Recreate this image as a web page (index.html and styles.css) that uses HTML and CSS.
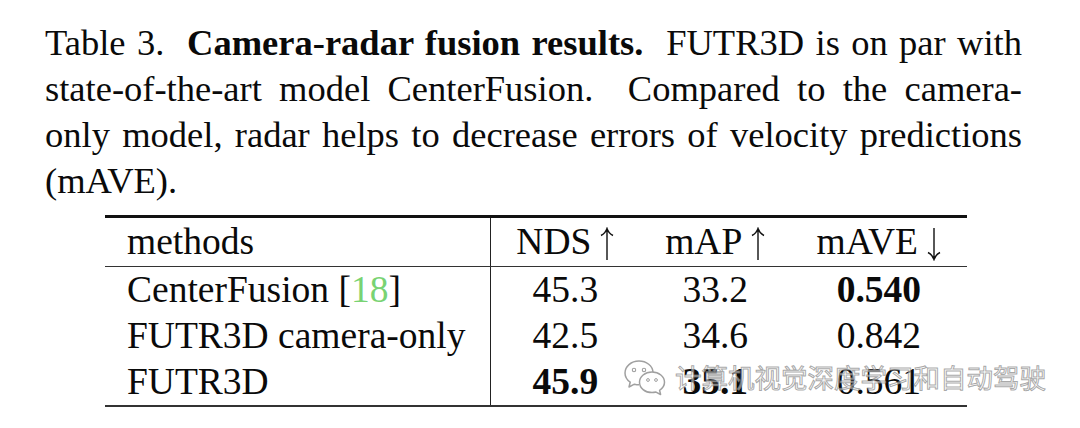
FILE: index.html
```html
<!DOCTYPE html>
<html lang="en">
<head>
    <meta charset="UTF-8">
    <meta name="viewport" content="width=device-width, initial-scale=1.0">
    <title>Table 3</title>
    <link rel="stylesheet" href="styles.css">
</head>
<body>
    <div class="page">
        <p class="caption">
            <span class="line">Table 3.&nbsp; <b>Camera-radar fusion results.</b>&nbsp; FUTR3D is on par with</span>
            <span class="line">state-of-the-art model CenterFusion.&nbsp; Compared to the camera-</span>
            <span class="line">only model, radar helps to decrease errors of velocity predictions</span>
            <span class="line last">(mAVE).</span>
        </p>

        <div class="table-wrap">
            <table class="results">
                <thead>
                    <tr>
                        <th class="method">methods</th>
                        <th>NDS<svg class="arrow" width="14" height="34" viewBox="0 0 14 34"><path d="M7 1.5V33M1 8.5C4 7 6 4.5 7 1.5C8 4.5 10 7 13 8.5" fill="none" stroke="#111" stroke-width="1.4"/></svg></th>
                        <th>mAP<svg class="arrow" width="14" height="34" viewBox="0 0 14 34"><path d="M7 1.5V33M1 8.5C4 7 6 4.5 7 1.5C8 4.5 10 7 13 8.5" fill="none" stroke="#111" stroke-width="1.4"/></svg></th>
                        <th>mAVE<svg class="arrow" width="14" height="34" viewBox="0 0 14 34"><path d="M7 1V32.5M1 25.5C4 27 6 29.5 7 32.5C8 29.5 10 27 13 25.5" fill="none" stroke="#111" stroke-width="1.4"/></svg></th>
                    </tr>
                </thead>
                <tbody>
                    <tr>
                        <td class="method">CenterFusion [<span class="cite">18</span>]</td>
                        <td>45.3</td>
                        <td>33.2</td>
                        <td><b>0.540</b></td>
                    </tr>
                    <tr>
                        <td class="method">FUTR3D camera-only</td>
                        <td>42.5</td>
                        <td>34.6</td>
                        <td>0.842</td>
                    </tr>
                    <tr>
                        <td class="method">FUTR3D</td>
                        <td><b>45.9</b></td>
                        <td><b>35.1</b></td>
                        <td>0.561</td>
                    </tr>
                </tbody>
            </table>

            <!-- watermark sits on top of the last row -->
            <div class="watermark">
                <svg class="wm-icon" width="44" height="38" viewBox="0 0 44 38">
                    <path d="M16 3C8 3 2 8.5 2 15c0 3.8 2 7 5.2 9.2L6 29l5.4-2.8c1.5.4 3 .6 4.6.6"
                          fill="none" stroke="#a0a0a0" stroke-width="1.5" stroke-linejoin="round"/>
                    <path d="M16 3c7.6 0 13.6 5 14 11.2" fill="none" stroke="#a0a0a0" stroke-width="1.5"/>
                    <circle cx="11" cy="12" r="1.7" fill="none" stroke="#a0a0a0" stroke-width="1.1"/>
                    <circle cx="21" cy="12" r="1.7" fill="none" stroke="#a0a0a0" stroke-width="1.1"/>
                    <path d="M29 14c-7 0-12.5 4.6-12.5 10.3S22 34.6 29 34.6c1.4 0 2.7-.2 4-.5l4.6 2.4-1-4.2c2.9-1.9 4.9-4.8 4.9-8C41.5 18.6 36 14 29 14z"
                          fill="rgba(255,255,255,0.7)" stroke="#a0a0a0" stroke-width="1.5" stroke-linejoin="round"/>
                    <circle cx="25" cy="22" r="1.4" fill="none" stroke="#a0a0a0" stroke-width="1"/>
                    <circle cx="33" cy="22" r="1.4" fill="none" stroke="#a0a0a0" stroke-width="1"/>
                </svg>
                <span class="wm-text">计算机视觉深度学习和自动驾驶</span>
            </div>
        </div>
    </div>
</body>
</html>
```

FILE: styles.css
```css
body {
    margin: 0;
    background: #fff;
    color: #0a0a0a;
    font-family: "Liberation Serif", "Times New Roman", serif;
}
.page {
    width: 1080px;
    height: 428px;
    overflow: hidden;
}
.caption {
    margin: 0;
    padding: 20px 0 0 45px;
    width: 977px;
    font-size: 36.5px;
    line-height: 46px;
}
.caption .line {
    display: block;
    text-align: justify;
    text-align-last: justify;
}
.caption .line.last {
    text-align-last: left;
}
.table-wrap {
    position: relative;
    margin: 11px 0 0 105px;
    width: 862px;
}
.results {
    width: 100%;
    border-collapse: collapse;
    font-size: 37.5px;
    line-height: 46px;
    border-top: 3px solid #111;
    border-bottom: 2px solid #333;
}
.results th, .results td {
    padding: 0 22px;
    text-align: center;
    font-weight: normal;
    white-space: nowrap;
}
.results th {
    padding-top: 1px;
    padding-bottom: 1px;
    border-bottom: 1px solid #333;
}
.results .method {
    text-align: left;
    width: 341px;
    border-right: 1px solid #222;
}
.results b {
    font-weight: bold;
}
.arrow {
    vertical-align: -7px;
    margin-left: 9px;
}
.cite {
    color: #79d373;
}
.watermark {
    position: absolute;
    left: 518px;
    top: 142px;
    display: flex;
    align-items: center;
    gap: 8px;
}
.wm-text {
    font-family: "Noto Sans CJK SC", sans-serif;
    font-size: 26.5px;
    color: rgba(255, 255, 255, 0.5);
    -webkit-text-stroke: 1px rgba(130, 130, 130, 0.7);
    white-space: nowrap;
}
```
